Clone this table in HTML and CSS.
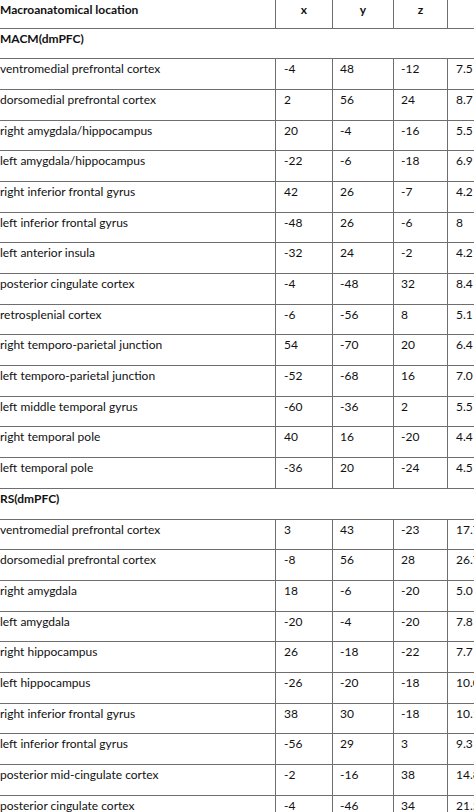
FILE: index.html
```html
<!DOCTYPE html>
<html>
<head>
<meta charset="utf-8">
<link rel="stylesheet" href="styles.css">
</head>
<body>
<table class="coords">
  <thead>
    <tr class="head">
      <th class="loc">Macroanatomical location</th>
      <th class="num">x</th>
      <th class="num">y</th>
      <th class="num">z</th>
      <th class="num">Z</th>
    </tr>
  </thead>
  <tbody>
    <tr class="section"><td colspan="5">MACM(dmPFC)</td></tr>
    <tr><td class="loc">ventromedial prefrontal cortex</td><td>-4</td><td>48</td><td>-12</td><td>7.5</td></tr>
    <tr><td class="loc">dorsomedial prefrontal cortex</td><td>2</td><td>56</td><td>24</td><td>8.7</td></tr>
    <tr><td class="loc">right amygdala/hippocampus</td><td>20</td><td>-4</td><td>-16</td><td>5.5</td></tr>
    <tr><td class="loc">left amygdala/hippocampus</td><td>-22</td><td>-6</td><td>-18</td><td>6.9</td></tr>
    <tr><td class="loc">right inferior frontal gyrus</td><td>42</td><td>26</td><td>-7</td><td>4.2</td></tr>
    <tr><td class="loc">left inferior frontal gyrus</td><td>-48</td><td>26</td><td>-6</td><td>8</td></tr>
    <tr><td class="loc">left anterior insula</td><td>-32</td><td>24</td><td>-2</td><td>4.2</td></tr>
    <tr><td class="loc">posterior cingulate cortex</td><td>-4</td><td>-48</td><td>32</td><td>8.4</td></tr>
    <tr><td class="loc">retrosplenial cortex</td><td>-6</td><td>-56</td><td>8</td><td>5.1</td></tr>
    <tr><td class="loc">right temporo-parietal junction</td><td>54</td><td>-70</td><td>20</td><td>6.4</td></tr>
    <tr><td class="loc">left temporo-parietal junction</td><td>-52</td><td>-68</td><td>16</td><td>7.0</td></tr>
    <tr><td class="loc">left middle temporal gyrus</td><td>-60</td><td>-36</td><td>2</td><td>5.5</td></tr>
    <tr><td class="loc">right temporal pole</td><td>40</td><td>16</td><td>-20</td><td>4.4</td></tr>
    <tr><td class="loc">left temporal pole</td><td>-36</td><td>20</td><td>-24</td><td>4.5</td></tr>
    <tr class="section"><td colspan="5">RS(dmPFC)</td></tr>
    <tr><td class="loc">ventromedial prefrontal cortex</td><td>3</td><td>43</td><td>-23</td><td>17.7</td></tr>
    <tr><td class="loc">dorsomedial prefrontal cortex</td><td>-8</td><td>56</td><td>28</td><td>26.7</td></tr>
    <tr><td class="loc">right amygdala</td><td>18</td><td>-6</td><td>-20</td><td>5.0</td></tr>
    <tr><td class="loc">left amygdala</td><td>-20</td><td>-4</td><td>-20</td><td>7.8</td></tr>
    <tr><td class="loc">right hippocampus</td><td>26</td><td>-18</td><td>-22</td><td>7.7</td></tr>
    <tr><td class="loc">left hippocampus</td><td>-26</td><td>-20</td><td>-18</td><td>10.0</td></tr>
    <tr><td class="loc">right inferior frontal gyrus</td><td>38</td><td>30</td><td>-18</td><td>10.1</td></tr>
    <tr><td class="loc">left inferior frontal gyrus</td><td>-56</td><td>29</td><td>3</td><td>9.3</td></tr>
    <tr><td class="loc">posterior mid-cingulate cortex</td><td>-2</td><td>-16</td><td>38</td><td>14.8</td></tr>
    <tr><td class="loc">posterior cingulate cortex</td><td>-4</td><td>-46</td><td>34</td><td>21.5</td></tr>
  </tbody>
</table>
</body>
</html>
```

FILE: styles.css
```css
html, body {
  margin: 0;
  padding: 0;
  background: #ffffff;
  overflow: hidden;
  width: 474px;
  height: 812px;
}

.coords {
  border-collapse: collapse;
  table-layout: fixed;
  width: 504px;
  font-family: Lato, "Liberation Sans", sans-serif;
  font-size: 12px;
  line-height: 15px;
  color: #111111;
}

.coords th,
.coords td {
  border: 1px solid #6e6e6e;
  padding: 2px 0 0 7px;
  text-align: left;
  vertical-align: top;
  white-space: nowrap;
  overflow: visible;
}

.coords th:nth-child(1), .coords td:nth-child(1) { width: 275px; }
.coords th:nth-child(2), .coords td:nth-child(2) { width: 56px; }
.coords th:nth-child(3), .coords td:nth-child(3) { width: 60px; }
.coords th:nth-child(4), .coords td:nth-child(4) { width: 53px; }
.coords th:nth-child(5), .coords td:nth-child(5) { width: 60px; }

.coords tr > :first-child {
  border-left: none;
  padding-left: 0;
}

.coords thead tr {
  height: 28px;
}

.coords th {
  border-top: none;
  font-weight: 700;
}

.coords th.num {
  text-align: center;
  padding-left: 0;
}

.coords tbody tr {
  height: 30.7px;
}

.coords td:nth-child(2) { padding-left: 8px; }
.coords td:nth-child(5) { padding-left: 8px; }

.coords tr.section td {
  font-weight: 700;
  border-left: none;
  border-right: none;
}
```
